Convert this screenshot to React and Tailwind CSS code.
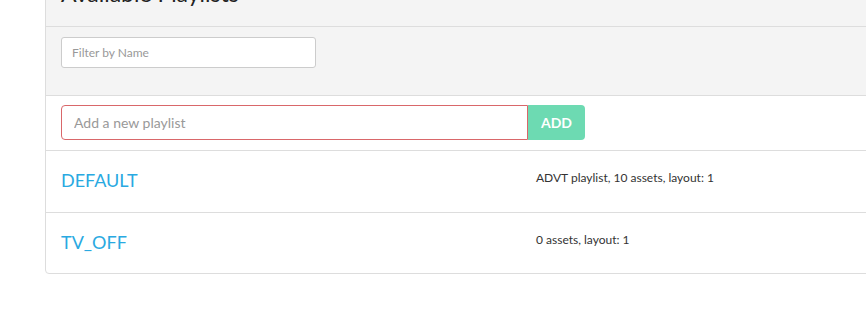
export default function App() {
  const rows = [
    { name: "DEFAULT", desc: "ADVT playlist, 10 assets, layout: 1" },
    { name: "TV_OFF", desc: "0 assets, layout: 1" },
  ];
  return (
    <div className="w-[866px] h-[330px] overflow-hidden bg-white" style={{ fontFamily: "Lato, 'Open Sans', sans-serif" }}>
      <div className="pl-[45px] -mt-[40px]">
        <div className="w-[900px] border border-[#dddddd] rounded-[4px] overflow-hidden">
          <div className="bg-[#f4f4f4] pt-[18px] pb-[19px] pl-[15px] border-b border-[#dddddd]">
            <h3 className="text-[23px] leading-[28px] text-[#222222]">Available Playlists</h3>
          </div>
          <div className="bg-[#f4f4f4] pt-[10px] pb-[27px] pl-[15px] border-b border-[#dddddd]">
            <input
              className="w-[255px] h-[31px] bg-white border border-[#cccccc] rounded-[3px] px-[10px] text-[12px] text-[#555] placeholder:text-[#999999] outline-none"
              placeholder="Filter by Name"
            />
          </div>
          <div className="pt-[9px] pb-[10px] pl-[15px] border-b border-[#dddddd] flex">
            <input
              className="w-[467px] h-[35px] bg-white border border-[#d9676a] rounded-l-[4px] px-[12px] text-[14px] text-[#555] placeholder:text-[#999999] outline-none"
              placeholder="Add a new playlist"
            />
            <button className="w-[57px] h-[35px] bg-[#6ddab2] rounded-r-[4px] text-white font-bold text-[14px]">ADD</button>
          </div>
          {rows.map((r, i) => (
            <div
              key={r.name}
              className={`flex items-start pt-[18px] pl-[15px] ${i === 0 ? "h-[62px] border-b border-[#dddddd]" : "h-[60px]"}`}
            >
              <div className="w-[475px] text-[18px] leading-[22px] text-[#29a9e1]">{r.name}</div>
              <div className="mt-[1px] text-[12px] leading-[16px] text-[#333333]">{r.desc}</div>
            </div>
          ))}
        </div>
      </div>
    </div>
  );
}
